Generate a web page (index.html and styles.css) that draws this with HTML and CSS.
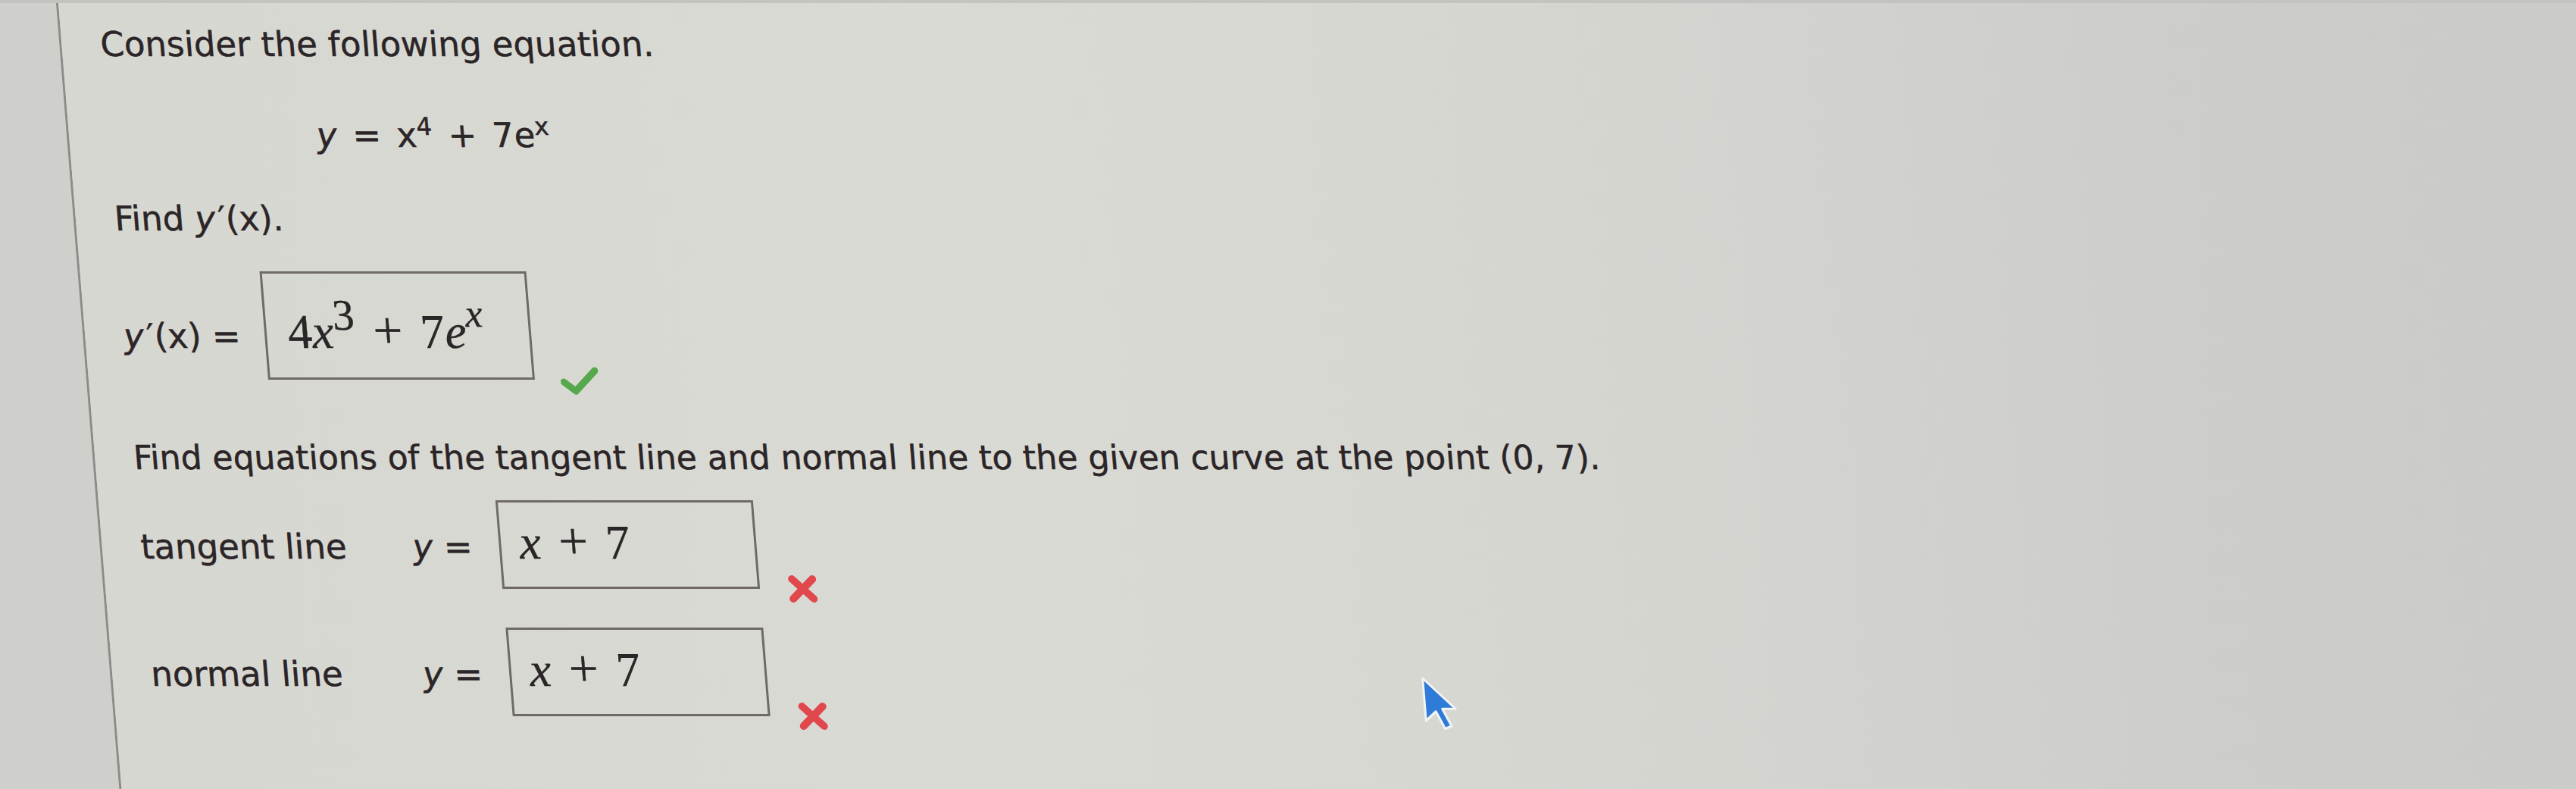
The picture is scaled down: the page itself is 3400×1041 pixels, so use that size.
FILE: index.html
```html
<!DOCTYPE html>
<html lang="en">
<head>
<meta charset="utf-8">
<title>Tangent and normal lines</title>
<link rel="stylesheet" href="styles.css">
</head>
<body>
<div class="page">
  <aside class="rail"></aside>
  <main class="content">
    <p class="prompt first">Consider the following equation.</p>
    <p class="given"><span class="eq"><i>y</i> = x<sup>4</sup> + 7e<sup>x</sup></span></p>
    <p class="prompt find">Find <i class="var">y</i>′(x).</p>

    <div class="answer-row deriv">
      <span class="label deriv-label"><i class="var">y</i>′(x) =</span>
      <div class="math-box box-deriv">
        <span class="math">4<i>x</i><sup class="s-num">3</sup><span class="op">+</span>7<i>e</i><sup class="s-var"><i>x</i></sup></span>
      </div>
      <svg class="mark check" viewBox="0 0 50 38" aria-label="correct">
        <path d="M4 21 L19 33 L46 6" fill="none" stroke="#55a84b" stroke-width="9" stroke-linecap="round" stroke-linejoin="round"/>
      </svg>
    </div>

    <p class="prompt lead">Find equations of the tangent line and normal line to the given curve at the point (0, 7).</p>

    <div class="answer-row line-row tangent">
      <span class="label line-name">tangent line</span>
      <span class="label eq-y"><i>y</i> =</span>
      <div class="math-box box-line">
        <span class="math"><i>x</i><span class="op">+</span>7</span>
      </div>
      <svg class="mark cross" viewBox="0 0 43 40" aria-label="incorrect">
        <path d="M8 7 L35 33 M35 7 L8 33" fill="none" stroke="#e0484e" stroke-width="10" stroke-linecap="round"/>
      </svg>
    </div>

    <div class="answer-row line-row normal">
      <span class="label line-name">normal line</span>
      <span class="label eq-y"><i>y</i> =</span>
      <div class="math-box box-line">
        <span class="math"><i>x</i><span class="op">+</span>7</span>
      </div>
      <svg class="mark cross" viewBox="0 0 43 40" aria-label="incorrect">
        <path d="M8 7 L35 33 M35 7 L8 33" fill="none" stroke="#e0484e" stroke-width="10" stroke-linecap="round"/>
      </svg>
    </div>
  </main>

  <svg class="pointer" viewBox="0 0 56 84" aria-hidden="true">
    <polygon points="6,5 6,61 20,48.75 30.5,71.5 39.25,68 28.75,45.25 46.25,45.25" fill="#2f7bd8" stroke="#f1f3f4" stroke-width="3" stroke-linejoin="round"/>
  </svg>
</div>
</body>
</html>
```

FILE: styles.css
```css
html, body {
  margin: 0;
  padding: 0;
}

body {
  width: 3400px;
  height: 1041px;
  overflow: hidden;
  background: linear-gradient(90deg, #cfcfcb 0, #cfcfcb 200px, #cbcbc8 200px, #cbcbc8 100%);
  border-top: 4px solid #c3c3bf;
  box-sizing: border-box;
}

.page {
  position: relative;
  display: flex;
  width: 3312px;
  height: 1037px;
  transform: skewX(4.6deg);
  transform-origin: 0 0;
  font-family: "DejaVu Sans", Verdana, sans-serif;
  color: #2b2527;
}

.rail {
  flex: none;
  width: 74px;
  background: #cfcfcb;
  border-right: 3px solid #8d8b87;
}

.content {
  flex: 1;
  padding-left: 51px;
  background: linear-gradient(90deg, #d7d7d1 0%, #dadad4 35%, #d8d8d3 50%, #d3d3cf 68%, #cdcdca 85%, #cbcbc8 100%);
}

p {
  margin: 0;
}

.prompt,
.given,
.label {
  font-size: 45px;
  line-height: 60px;
  -webkit-text-stroke: 0.5px #2b2527;
}

.var {
  padding-right: 0.08em;
}

.first {
  margin-top: 25px;
}

.given {
  margin-top: 60px;
  padding-left: 276px;
}

.eq {
  word-spacing: 0.14em;
}

.eq sup {
  font-size: 0.72em;
  line-height: 0;
  vertical-align: 0.5em;
}

.find {
  margin-top: 50px;
}

.lead {
  margin-top: 73px;
  font-size: 44px;
}

.answer-row {
  display: flex;
  align-items: baseline;
}

.deriv {
  margin-top: 39px;
}

.deriv-label {
  flex: none;
  width: 186px;
  white-space: nowrap;
}

.math-box {
  flex: none;
  box-sizing: border-box;
  border: 3px solid #6f6a66;
}

.box-deriv {
  width: 352px;
  height: 143px;
  padding: 37px 0 0 28px;
}

.box-line {
  width: 340px;
  height: 117px;
  padding: 13px 0 0 24px;
}

.math {
  display: block;
  font-family: "Liberation Serif", "Times New Roman", serif;
  font-size: 64px;
  line-height: 80px;
  color: #2a2627;
  white-space: nowrap;
  -webkit-text-stroke: 0.4px #2a2627;
}

.math i {
  font-style: italic;
}

.math .op {
  margin: 0 0.34em;
  font-size: 1.08em;
  line-height: 0;
}

.s-num {
  font-size: 0.9em;
  line-height: 0;
  vertical-align: 0.42em;
}

.s-var {
  font-size: 0.8em;
  line-height: 0;
  vertical-align: 0.55em;
}

.mark {
  flex: none;
  align-self: flex-end;
}

.check {
  width: 50px;
  height: 38px;
  margin-left: 34px;
  margin-bottom: -20px;
}

.cross {
  width: 43px;
  height: 40px;
  margin-left: 35px;
  margin-bottom: -20px;
}

.tangent {
  margin-top: 26px;
}

.normal {
  margin-top: 51px;
}

.line-name {
  flex: none;
  width: 359px;
  white-space: nowrap;
}

.eq-y {
  flex: none;
  width: 114px;
  white-space: nowrap;
}

.pointer {
  position: absolute;
  left: 1800px;
  top: 886px;
  width: 56px;
  height: 84px;
}
```
